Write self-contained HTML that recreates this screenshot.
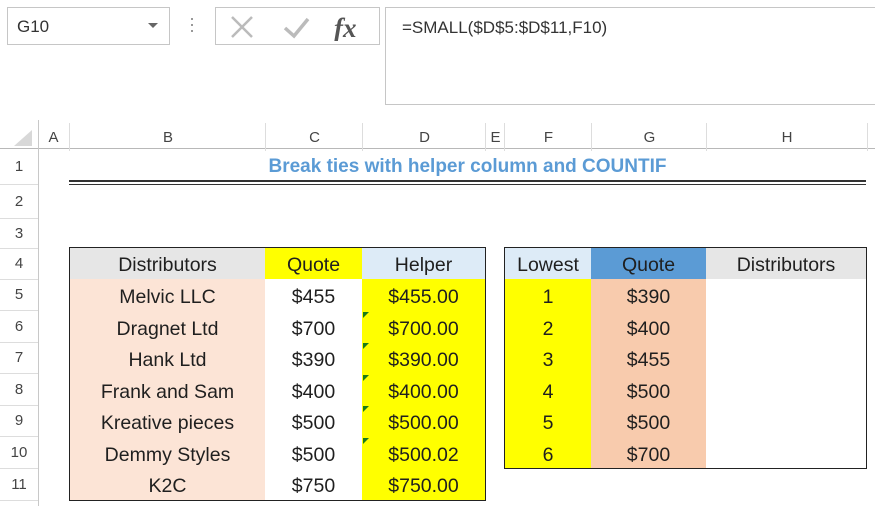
<!DOCTYPE html>
<html><head><style>
body{margin:0;width:875px;height:506px;background:#fff;position:relative;overflow:hidden;font-family:"Liberation Sans",sans-serif;color:#222}
.a{position:absolute;box-sizing:border-box}
.c{position:absolute;box-sizing:border-box;display:flex;align-items:center;justify-content:center;font-size:19.5px;color:#1f1f1f;padding-top:4px}
.h{position:absolute;display:flex;align-items:center;justify-content:center;font-size:15px;color:#444}
.tri{position:absolute;width:0;height:0;border-top:6px solid #1a7a1a;border-right:6px solid transparent}
</style></head><body>
<div class="a" style="left:7px;top:7px;width:163px;height:38px;border:1px solid #c6c6c6"></div>
<div class="a" style="left:17px;top:17px;font-size:17px;color:#333">G10</div>
<div class="a" style="left:148px;top:23px;border-left:5px solid transparent;border-right:5px solid transparent;border-top:5px solid #666"></div>
<div class="a" style="left:191px;top:18px;width:2px;height:2px;background:#999;box-shadow:0 6px #999,0 12px #999"></div>
<div class="a" style="left:215px;top:7px;width:165px;height:38px;border:1px solid #c6c6c6"></div>
<svg class="a" style="left:228px;top:13px" width="130" height="28"><path d="M4 4L24 24M24 4L4 24" stroke="#bbb" stroke-width="2.5"/><path d="M57 15L66 23L80 6" stroke="#bbb" stroke-width="3.5" fill="none"/><text x="106" y="24" font-family="Liberation Serif" font-style="italic" font-weight="bold" font-size="27" fill="#555">fx</text></svg>
<div class="a" style="left:385px;top:7px;width:495px;height:98px;border:1px solid #c6c6c6"></div>
<div class="a" style="left:402px;top:18px;font-size:17px;color:#333">=SMALL($D$5:$D$11,F10)</div>
<div class="a" style="left:0;top:121px;width:875px;height:28px;border-bottom:1px solid #b8b8b8"></div>
<div class="a" style="left:14px;top:130px;border-left:18px solid transparent;border-bottom:16px solid #d8d8d8"></div>
<div class="a" style="left:38px;top:120px;width:1px;height:386px;background:#c8c8c8"></div>
<div class="h" style="left:38px;top:123px;width:31px;height:28px">A</div>
<div class="h" style="left:69px;top:123px;width:196px;height:28px;border-left:1px solid #ddd">B</div>
<div class="h" style="left:265px;top:123px;width:97px;height:28px;border-left:1px solid #ddd">C</div>
<div class="h" style="left:362px;top:123px;width:123px;height:28px;border-left:1px solid #ddd">D</div>
<div class="h" style="left:485px;top:123px;width:19px;height:28px;border-left:1px solid #ddd">E</div>
<div class="h" style="left:504px;top:123px;width:87px;height:28px;border-left:1px solid #ddd">F</div>
<div class="h" style="left:591px;top:123px;width:115px;height:28px;border-left:1px solid #ddd">G</div>
<div class="h" style="left:706px;top:123px;width:160px;height:28px;border-left:1px solid #ddd;border-right:1px solid #ddd">H</div>
<div class="h" style="left:0;top:149px;width:38px;height:35px;border-bottom:1px solid #ddd">1</div>
<div class="h" style="left:0;top:184px;width:38px;height:34px;border-bottom:1px solid #ddd">2</div>
<div class="h" style="left:0;top:218px;width:38px;height:30px;border-bottom:1px solid #ddd">3</div>
<div class="h" style="left:0;top:248px;width:38px;height:31px;border-bottom:1px solid #ddd">4</div>
<div class="h" style="left:0;top:279px;width:38px;height:31px;border-bottom:1px solid #ddd">5</div>
<div class="h" style="left:0;top:310px;width:38px;height:32px;border-bottom:1px solid #ddd">6</div>
<div class="h" style="left:0;top:342px;width:38px;height:31px;border-bottom:1px solid #ddd">7</div>
<div class="h" style="left:0;top:373px;width:38px;height:32px;border-bottom:1px solid #ddd">8</div>
<div class="h" style="left:0;top:405px;width:38px;height:31px;border-bottom:1px solid #ddd">9</div>
<div class="h" style="left:0;top:436px;width:38px;height:32px;border-bottom:1px solid #ddd">10</div>
<div class="h" style="left:0;top:468px;width:38px;height:32px;border-bottom:1px solid #ddd">11</div>
<div class="a" style="left:69px;top:156px;width:797px;text-align:center;font-size:19px;font-weight:bold;color:#5b9bd5">Break ties with helper column and COUNTIF</div>
<div class="a" style="left:69px;top:180px;width:797px;height:5px;border-top:2px solid #333;border-bottom:1px solid #333"></div>
<div class="a" style="left:69px;top:247px;width:417px;height:254px;border:1.5px solid #222"></div>
<div class="c" style="left:70px;top:248px;width:195px;height:31px;background:#e6e6e6">Distributors</div>
<div class="c" style="left:265px;top:248px;width:97px;height:31px;background:#ffff00">Quote</div>
<div class="c" style="left:362px;top:248px;width:123px;height:31px;background:#ddebf7">Helper</div>
<div class="a" style="left:70px;top:279px;width:195px;height:221px;background:#fce4d6"></div>
<div class="a" style="left:362px;top:279px;width:123px;height:221px;background:#ffff00"></div>
<div class="c" style="left:70px;top:279px;width:195px;height:32px">Melvic LLC</div>
<div class="c" style="left:70px;top:311px;width:195px;height:32px">Dragnet Ltd</div>
<div class="c" style="left:70px;top:342px;width:195px;height:32px">Hank Ltd</div>
<div class="c" style="left:70px;top:374px;width:195px;height:32px">Frank and Sam</div>
<div class="c" style="left:70px;top:405px;width:195px;height:32px">Kreative pieces</div>
<div class="c" style="left:70px;top:437px;width:195px;height:32px">Demmy Styles</div>
<div class="c" style="left:70px;top:468px;width:195px;height:32px">K2C</div>
<div class="c" style="left:265px;top:279px;width:97px;height:32px">$455</div>
<div class="c" style="left:265px;top:311px;width:97px;height:32px">$700</div>
<div class="c" style="left:265px;top:342px;width:97px;height:32px">$390</div>
<div class="c" style="left:265px;top:374px;width:97px;height:32px">$400</div>
<div class="c" style="left:265px;top:405px;width:97px;height:32px">$500</div>
<div class="c" style="left:265px;top:437px;width:97px;height:32px">$500</div>
<div class="c" style="left:265px;top:468px;width:97px;height:32px">$750</div>
<div class="c" style="left:362px;top:279px;width:123px;height:32px">$455.00</div>
<div class="c" style="left:362px;top:311px;width:123px;height:32px">$700.00</div>
<div class="c" style="left:362px;top:342px;width:123px;height:32px">$390.00</div>
<div class="c" style="left:362px;top:374px;width:123px;height:32px">$400.00</div>
<div class="c" style="left:362px;top:405px;width:123px;height:32px">$500.00</div>
<div class="c" style="left:362px;top:437px;width:123px;height:32px">$500.02</div>
<div class="c" style="left:362px;top:468px;width:123px;height:32px">$750.00</div>
<div class="tri" style="left:363px;top:312px"></div>
<div class="tri" style="left:363px;top:343px"></div>
<div class="tri" style="left:363px;top:375px"></div>
<div class="tri" style="left:363px;top:406px"></div>
<div class="tri" style="left:363px;top:438px"></div>
<div class="a" style="left:504px;top:247px;width:363px;height:222px;border:1.5px solid #222"></div>
<div class="c" style="left:505px;top:248px;width:86px;height:31px;background:#ddebf7">Lowest</div>
<div class="c" style="left:591px;top:248px;width:115px;height:31px;background:#5b9bd5">Quote</div>
<div class="c" style="left:706px;top:248px;width:160px;height:31px;background:#e6e6e6">Distributors</div>
<div class="a" style="left:505px;top:279px;width:86px;height:189px;background:#ffff00"></div>
<div class="a" style="left:591px;top:279px;width:115px;height:189px;background:#f8cbad"></div>
<div class="c" style="left:505px;top:279px;width:86px;height:32px">1</div>
<div class="c" style="left:505px;top:311px;width:86px;height:32px">2</div>
<div class="c" style="left:505px;top:342px;width:86px;height:32px">3</div>
<div class="c" style="left:505px;top:374px;width:86px;height:32px">4</div>
<div class="c" style="left:505px;top:405px;width:86px;height:32px">5</div>
<div class="c" style="left:505px;top:437px;width:86px;height:32px">6</div>
<div class="c" style="left:591px;top:279px;width:115px;height:32px">$390</div>
<div class="c" style="left:591px;top:311px;width:115px;height:32px">$400</div>
<div class="c" style="left:591px;top:342px;width:115px;height:32px">$455</div>
<div class="c" style="left:591px;top:374px;width:115px;height:32px">$500</div>
<div class="c" style="left:591px;top:405px;width:115px;height:32px">$500</div>
<div class="c" style="left:591px;top:437px;width:115px;height:32px">$700</div>
</body></html>
